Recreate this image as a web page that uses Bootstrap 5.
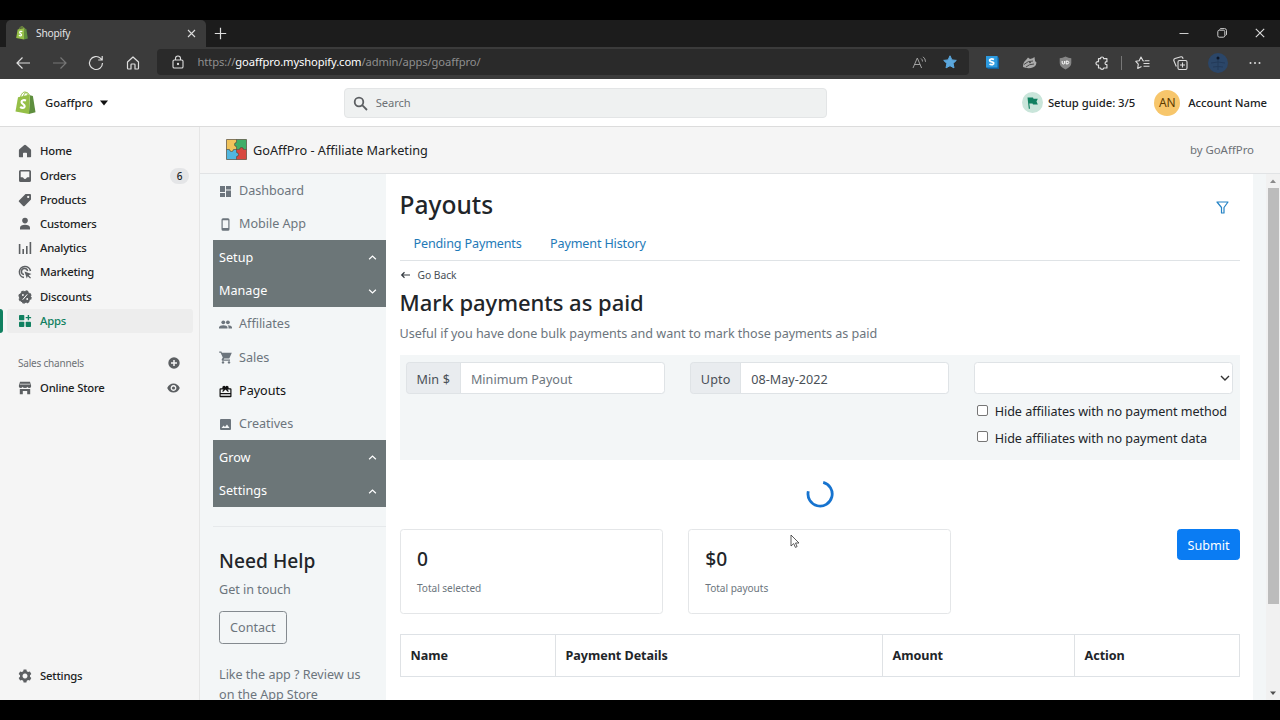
<!DOCTYPE html>
<html lang="en">
<head>
<meta charset="utf-8">
<meta name="viewport" content="width=device-width, initial-scale=1">
<title>Shopify</title>
<link href="https://cdn.jsdelivr.net/npm/bootstrap@5.3.0/dist/css/bootstrap.min.css" rel="stylesheet">
<style>
body{font-family:"Noto Sans","Open Sans",sans-serif;font-size:12.6px;line-height:20px;color:#212529;background:#000;padding:20px 0;height:720px;overflow:hidden;letter-spacing:-.04px}
svg{display:block;flex:none}
.window{height:680px;background:#f5f5f5}
/* browser chrome */
.strip{height:27px;background:#1c1c1c;color:#e4e4e4;padding-left:6px}
.btab{width:200px;background:#3b3b3b;border-radius:5px 5px 0 0;font-size:10.2px;padding:0 10px;letter-spacing:-.2px}
.controls{gap:28px;padding-right:15px}
.toolbar{height:32px;background:#3b3b3b;color:#dedede;padding:0 0 0 15px}
.nav-ico{gap:20.6px;width:142px}
.address{width:812px;flex-shrink:0;height:26px;background:#2a2a2a;border-radius:4px;font-size:11.2px;color:#8f8f8f;letter-spacing:-.1px;padding:0 12px 0 14px;margin-top:-1px}
.address b{font-weight:400;color:#fff}
.url{margin-left:12.5px}
.ext{gap:22.6px;padding-left:16px}
.ext .sep{margin:0 -10px}
.ext .profile{margin:0 -2px}
/* admin header */
.admin-top{height:49px;background:#fff;border-bottom:1px solid #dcdcdc;font-size:11.3px;font-weight:500;color:#202223;padding:1px 13px 0 15px}
.search-box{width:483px;height:30px;margin-left:236px;background:#eff1f1;border:1px solid #e3e5e6;border-radius:4px;font-weight:400;font-size:11.2px;color:#6d7175;padding:1px 0 0 8px;letter-spacing:-.12px}
.bag-gap{margin-left:9px}
.caret{margin-left:7px}
.flag{width:21px;height:21px;border-radius:50%;background:#c9e5da}
.setup{margin:0 19px 0 5px}
.avatar-an{width:26px;height:26px;border-radius:50%;background:#f7c66b;color:#5c3a00;font-weight:400;font-size:12px;line-height:26px;text-align:center}
/* admin sidebar */
.side{width:200px;border-right:1px solid #e6e6e6;padding:12.2px 7px 11.5px 7px;font-size:11.3px;font-weight:500;color:#202223;letter-spacing:-.2px}
.side-row{height:24.2px;gap:8px;padding:0 8px 0 11px}
.side-row svg{fill:#5c5f62}
.side-row.on{background:#ededed;border-radius:3px;color:#108060;margin-right:-.5px;position:relative}
.side-row.on svg{fill:#108060}
.side-row.on::before{content:"";position:absolute;left:-7px;top:0;width:2.5px;height:24px;background:#108060;border-radius:0 3px 3px 0}
.count{background:#e4e5e7;border-radius:9px;width:19px;height:16px;line-height:16px;text-align:center;font-size:10px;margin-right:-5px}
.channels{font-size:10px;font-weight:400;color:#6d7175;margin-top:18.4px}
/* app frame */
.app-title{height:46.5px;border-bottom:1.5px solid #e1e3e5;padding:0 26px 0 26px;font-size:12.7px;color:#202223;letter-spacing:0}
.app-name{margin-left:6px}
.by{font-size:11.4px;color:#6d7175}
.frame{background:#f3f6f7}
.app-side{width:186px;padding-left:12.6px;color:#6c757d}
.item{height:33.35px;gap:7px;padding:1.5px 0 0 6.5px;line-height:20px}
.item svg{fill:#6c757d}
.item.on{color:#111}.item.on svg{fill:#111}
.item.grp{background:#6c7678;color:#fff;padding-right:9px;letter-spacing:0}
.help{border-top:1px solid #e6e9eb;margin-top:19px;padding:21.5px 6.5px 0}
.help h5{font-size:19.2px;font-weight:500;line-height:24px;color:#212529;margin:0 0 7px;letter-spacing:0}
.help .btn{font-size:12.6px;line-height:20px;padding:6.3px 10px 4.3px;border:1px solid #848a8f;color:#6c757d;border-radius:3.4px;margin:11.5px 0 21px;letter-spacing:-.02px}
.review{max-width:150px}
.content{background:#fff;padding:0 13.5px 0 13.5px}
.content h2{font-size:24.5px;font-weight:500;line-height:30px;margin:0;padding-top:16px;letter-spacing:.02px}
.content h3{font-size:22px;font-weight:500;line-height:28px;margin:-1.5px 0 8px;letter-spacing:-.03px}
.tabs{height:31px;border-bottom:1px solid #dfe3e6;margin-top:10.4px;gap:28.500px;padding:4px 0 0 14px;color:#1f7ab8;letter-spacing:-.16px}
.goback{font-size:10.3px;gap:7px;color:#495057;height:28px;padding-top:0}
.filters{background:#f3f6f7;height:105px;margin-top:11.5px;padding:6.5px 6px 0}
.filters .row,.totals.row{--bs-gutter-x:25px}
.filters .input-group-text,.filters .form-control,.filters .form-select{font-size:12.6px;line-height:20px;padding:7px 10px 3.400px;height:32.5px;border-color:#dfe3e6;border-radius:3.4px;color:#495057}
.filters .input-group-text{background:#e9ecef;letter-spacing:.1px}
.filters .form-control::placeholder{color:#6c757d}
.filters .form-select{background-image:url("data:image/svg+xml,%3csvg xmlns='http://www.w3.org/2000/svg' viewBox='0 0 10 10'%3e%3cpath d='M1 3l4 4 4-4' fill='none' stroke='%23333' stroke-width='1.4'/%3e%3c/svg%3e");background-size:10px;background-position:right 2px center}
.chk{height:26.7px;gap:6.500px;padding:1.5px 0 0 3px;line-height:20px}
.chk input{width:11px;height:11px;margin:0 0 4px;border:1px solid #767676;border-radius:2px;appearance:none;background:#fff}
.loading{height:68.5px}
.stat{height:85.5px;border:1px solid #e4e6e8;border-radius:3.4px;padding:17.500px 16.5px;color:#212529}
.stat strong{display:block;font-size:19.2px;font-weight:500;line-height:24px}
.stat span{font-size:10.1px;color:#6c757d;line-height:16px;display:block;margin-top:9px}
.totals .btn{font-size:12.6px;line-height:20px;padding:6px 9.5px 3.6px;border-radius:3.4px;background:#0a7cf3;border-color:#0a7cf3;color:#fff;margin-right:-.5px}
.pay{table-layout:fixed;border-color:#dee2e6;margin:20px 0 0}
.pay th{height:42px;padding:1.500px 10px 0;vertical-align:middle;font-weight:700;border-color:#dfe2e5}
.gap-right{width:13px}
.sbar{width:14px;background:#f1f1f1}
.sbar i{display:block;width:11px;height:416px;margin:0 auto;background:#bcbcbc}
.filter-icon{margin:27.500px 11px 0 0}
.pointer{position:absolute;left:790px;top:534px}
</style>
</head>
<body>
<svg width="0" height="0" class="position-absolute">
<symbol id="bag" viewBox="0 0 20 24"><path d="M14.5 4.2 17.4 5 20 21.3 13.4 23z" fill="#5e8e3e"/><path d="M2.5 6.2 14.4 3.6 13.5 23 0 20.5z" fill="#95bf47"/><path d="M5 5.8C6 2.5 8 .8 9.6 1c1.700.2 2.400 2 2.400 3.500M8 5C8.700 2.300 10.500.8 12 1.600c1 .5 1.400 1.700 1.600 2.800" fill="none" stroke="#95bf47" stroke-width="1"/><path d="M10.500 9.600C8.800 8.700 6 9 6 11.100c0 2.100 3.400 2 3.200 4.200-.2 2-2.900 2-4.500.6" fill="none" stroke="#fff" stroke-width="2.100"/></symbol>
<symbol id="up" viewBox="0 0 8 6"><path d="M1 4.500 4 1.700l3 2.800" fill="none" stroke="#fff" stroke-width="1.100"/></symbol>
<symbol id="down" viewBox="0 0 8 6"><path d="M1 1.500 4 4.300l3-2.800" fill="none" stroke="#fff" stroke-width="1.100"/></symbol>
</svg>

<div class="window d-flex flex-column">
  <div class="strip d-flex">
    <div class="btab d-flex align-items-center">
      <svg width="12" height="14"><use href="#bag"/></svg><span class="ms-2">Shopify</span>
      <svg class="ms-auto" width="9" height="9" viewBox="0 0 9 9"><path d="M1 1l7 7M8 1 1 8" stroke="#ddd" stroke-width="1.100"/></svg>
    </div>
    <svg class="align-self-center ms-2" width="13" height="13" viewBox="0 0 13 13"><path d="M6.500.8v11.400M.8 6.500h11.400" stroke="#ddd" stroke-width="1.200"/></svg>
    <div class="controls ms-auto d-flex align-items-center">
      <svg width="10" height="10" viewBox="0 0 10 10"><path d="M.5 5.500h9" stroke="#ccc"/></svg>
      <svg width="10" height="10" viewBox="0 0 10 10" fill="none" stroke="#ccc"><rect x=".8" y="2.200" width="7" height="7" rx="1.500"/><path d="M2.500 1.500Q3 .6 4 .6h3.500q2 0 2 2V6q0 1.200-1 1.500"/></svg>
      <svg width="10" height="10" viewBox="0 0 10 10"><path d="M.8.8l8.400 8.400M9.200.8.8 9.200" stroke="#ddd" stroke-width="1.100"/></svg>
    </div>
  </div>

  <div class="toolbar d-flex align-items-center">
    <div class="nav-ico d-flex align-items-center flex-shrink-0">
      <svg width="16" height="16" viewBox="0 0 16 16" fill="none" stroke="#dedede" stroke-width="1.200"><path d="M15 8H2M7.500 2.500 2 8l5.500 5.500"/></svg>
      <svg width="16" height="16" viewBox="0 0 16 16" fill="none" stroke="#777" stroke-width="1.200"><path d="M1 8h13M8.500 2.500 14 8l-5.500 5.500"/></svg>
      <svg width="16" height="16" viewBox="0 0 16 16" fill="none" stroke="#dedede" stroke-width="1.200"><path d="M14.500 8A6.500 6.500 0 1 1 12.600 3.400L14 4.800M14.200 1v4h-4"/></svg>
      <svg width="16" height="16" viewBox="0 0 16 16" fill="none" stroke="#dedede" stroke-width="1.200"><path d="M2.500 7 8 2l5.500 5v6.200q0 .8-.8.8H10V9.800q0-.8-.8-.8H6.800q-.8 0-.8.8V14H3.300q-.8 0-.8-.8z" stroke-linejoin="round"/></svg>
    </div>
    <div class="address d-flex align-items-center">
      <svg width="14" height="14" viewBox="0 0 14 14" fill="none" stroke="#dedede" stroke-width="1.100"><rect x="2" y="5" width="10" height="8" rx="1.300"/><path d="M4.500 5V3.500a2.500 2.500 0 0 1 5 0V5"/><circle cx="7" cy="9" r=".6" fill="#fff"/></svg>
      <span class="url">https://<b>goaffpro.myshopify.com</b>/admin/apps/goaffpro/</span>
      <svg class="ms-auto" width="15" height="13" viewBox="0 0 15 13" fill="none" stroke="#a0a0a0" stroke-width="1"><path d="M1 12 5.300 2l4.300 10M2.500 8.500h5.600M9 2.500q1.500 1 1.500 3M11 .8q2.500 1.700 2.500 5"/></svg>
      <svg class="ms-3" width="14" height="14" viewBox="0 0 14 14"><path d="m7 .8 1.900 4.100 4.400.5-3.200 3 .9 4.500L7 10.700l-4 2.200.9-4.500-3.200-3 4.400-.5z" fill="#5ba7dd" stroke="#5ba7dd" stroke-linejoin="round"/></svg>
    </div>
    <div class="ext d-flex align-items-center">
      <svg width="14" height="14" viewBox="0 0 14 14"><path d="M1 0h11l2 2v11H3l-2-2z" fill="#0f5f9c"/><rect x="1" width="11.500" height="11.500" fill="#2d9be0"/><path d="M9 3.600Q7 2.600 5.500 3.200T5 5.200q.5.500 1.800.7t1.900.9q.4 1.300-1.200 1.800-1.700.3-3-.6" fill="none" stroke="#fff" stroke-width="1.700"/></svg>
      <svg width="15" height="13" viewBox="0 0 15 13"><path d="M1 11q0-5 3-7L6 1.500 8 3q3-.5 4.500-2L13 5l1.500 1.500Q14 11 9 12q-5 .5-8-1z" fill="#aaa"/><path d="M2 8.500q4-4 9-3.500M4 11q3-3 8-3" stroke="#4a4a4a" fill="none"/><circle cx="8" cy="6.500" r=".8" fill="#333"/></svg>
      <svg width="13" height="14" viewBox="0 0 13 14"><path d="M6.500.6q3 1.500 5.800 1.600V7q0 4-5.800 6.400Q.7 11 .7 7V2.200Q3.500 2.100 6.500.6z" fill="#868686"/><path d="M3.200 5v2q0 1 1.200 1t1.200-1V5M7.200 5v3q2.600.2 2.600-1.500T7.200 5z" fill="none" stroke="#fff"/></svg>
      <svg width="14" height="14" viewBox="0 0 14 14" fill="none" stroke="#dedede" stroke-width="1.200"><path d="M3.500 2.700h2q0-1.700 1.600-1.700t1.600 1.700h3.200v3Q10 5.700 10 7.200t1.900 1.500v3.300H8.700q0 1.400-1.600 1.400T5.500 12h-2V9Q1 9.200 1 7.300T3.500 5.700z" stroke-linejoin="round"/></svg>
      <svg class="sep" width="1" height="14"><path d="M.5 0v14" stroke="#777"/></svg>
      <svg width="15" height="14" viewBox="0 0 15 14" fill="none" stroke="#dedede" stroke-width="1.100"><path d="M9.500 5 8 4.800 6 1 4.200 4.800.8 5.300l2.500 2.800-.6 4.300 3.800-2M8.500 7.500h6M10 4.700h4.500M8.500 10.300h6" stroke-linejoin="round"/></svg>
      <svg width="15" height="14" viewBox="0 0 15 14" fill="none" stroke="#dedede" stroke-width="1.100"><rect x="5" y="4.500" width="9" height="9" rx="1.500"/><path d="M9.500 6.500v5M7 9h5M3.300 10.500.8 4.500Q.5 3 2 2.500L8 .8q1.200-.2 1.700 1l.4 1"/></svg>
      <svg class="profile" width="20" height="20" viewBox="0 0 20 20"><circle cx="10" cy="10" r="10" fill="#2b4668"/><path d="M10 4v13M3 10q7-2 14 0M5 14q5-1 10 0" stroke="#233a59" fill="none"/><circle cx="10" cy="5" r="1.500" fill="#0d1727"/></svg>
      <svg width="12" height="4" viewBox="0 0 12 4" fill="#ddd"><circle cx="1.500" cy="2" r="1"/><circle cx="6" cy="2" r="1"/><circle cx="10.500" cy="2" r="1"/></svg>
    </div>
  </div>

  <header class="admin-top d-flex align-items-center">
    <svg width="21" height="24"><use href="#bag"/></svg>
    <span class="bag-gap">Goaffpro</span>
    <svg class="caret" width="8" height="6" viewBox="0 0 8 6"><path d="M0 .5h8l-4 5z" fill="#111"/></svg>
    <div class="search-box d-flex align-items-center">
      <svg width="15" height="15" viewBox="0 0 15 15" fill="none" stroke="#5c5f62" stroke-width="1.800"><circle cx="6" cy="6" r="4.300"/><path d="m9.200 9.200 4.800 4.800"/></svg>
      <span class="ms-2">Search</span>
    </div>
    <div class="d-flex align-items-center ms-auto">
      <div class="flag d-flex align-items-center justify-content-center"><svg width="11" height="12" viewBox="0 0 11 12"><path d="M.5.500H6L6.500 1.700H10.800L9.500 4.500l1.300 3H6L5.500 6.500H2.300L3 11.800H1.800z" fill="#108060"/></svg></div>
      <span class="setup">Setup guide: 3/5</span>
      <div class="avatar-an">AN</div>
      <span class="ms-2">Account Name</span>
    </div>
  </header>

  <div class="d-flex flex-grow-1 overflow-hidden">
    <nav class="side d-flex flex-column flex-shrink-0">
      <div class="side-row d-flex align-items-center"><svg width="14" height="14" viewBox="0 0 14 14"><path d="M7 .8q.5 0 1 .4l4.600 4q.5.500.5 1.200v6q0 .8-.8.8H9V9.500q0-.8-.8-.8H5.800q-.8 0-.8.800v3.700H1.700q-.8 0-.8-.8v-6q0-.7.500-1.200L6 1.200q.5-.4 1-.4z"/></svg>Home</div>
      <div class="side-row d-flex align-items-center"><svg width="14" height="14" viewBox="0 0 14 14"><path fill-rule="evenodd" d="M2.500 1h9q1.500 0 1.500 1.500v9q0 1.500-1.500 1.500h-9Q1 13 1 11.500v-9Q1 1 2.500 1zm.2 1.600v5.600h1.600q.9 0 1.200.8.400.9 1.500.9t1.500-.9q.3-.8 1.200-.8h1.600V2.600z"/></svg>Orders<span class="count ms-auto">6</span></div>
      <div class="side-row d-flex align-items-center"><svg width="14" height="14" viewBox="0 0 14 14"><path fill-rule="evenodd" d="M7.500 1H12q1 0 1 1v4.500L6.600 12.900q-.8.500-1.500 0L1 8.800q-.6-.7 0-1.400zM10.200 2.800a1.100 1.100 0 1 0 .01 0z"/></svg>Products</div>
      <div class="side-row d-flex align-items-center"><svg width="14" height="14" viewBox="0 0 14 14"><circle cx="7" cy="3.600" r="2.800"/><path d="M2 12.500v-2q.5-2.700 5-2.700t5 2.700v2z"/></svg>Customers</div>
      <div class="side-row d-flex align-items-center"><svg width="14" height="14" viewBox="0 0 14 14"><path d="M.8 3h1.600v10H.800zM4.400 8H6v5H4.400zM8 5h1.600v8H8zM11.600 1h1.600v12h-1.600z"/></svg>Analytics</div>
      <div class="side-row d-flex align-items-center"><svg width="14" height="14" viewBox="0 0 14 14"><path d="M12.500 6A5.600 5.600 0 1 0 6 12.500M9.600 6A3.100 3.100 0 1 0 6 9.600" fill="none" stroke="#5c5f62" stroke-width="1.500"/><path d="m6.500 6.500 7 2.500-2.800 1.200 2.300 2.500-.9.900-2.400-2.400L8.800 13.500z"/></svg>Marketing</div>
      <div class="side-row d-flex align-items-center"><svg width="14" height="14" viewBox="0 0 14 14"><circle cx="7" cy="7" r="6" /><circle cx="7" cy="7" r="6" fill="none" stroke="#5c5f62" stroke-width="1.400" stroke-dasharray="2.600 2.110"/><path d="m4.700 9.700 4.600-5.400" stroke="#fff" stroke-width="1"/><circle cx="4.900" cy="5" r=".9" fill="#fff"/><circle cx="9.200" cy="9" r=".9" fill="#fff"/></svg>Discounts</div>
      <div class="side-row on d-flex align-items-center"><svg width="14" height="14" viewBox="0 0 14 14"><rect x="1" y="1" width="5.300" height="5.300" rx=".8"/><rect x="1" y="7.700" width="5.300" height="5.300" rx=".8"/><rect x="7.700" y="7.700" width="5.300" height="5.300" rx=".8"/><path d="M9.700 1h1.400v2h2v1.300h-2v2H9.700v-2h-2V3h2z"/></svg>Apps</div>
      <div class="side-row channels d-flex align-items-center">Sales channels<svg class="ms-auto me-1" width="12" height="12" viewBox="0 0 12 12"><circle cx="6" cy="6" r="5.700"/><path d="M6 3v6M3 6h6" stroke="#f5f5f5" stroke-width="1.500"/></svg></div>
      <div class="side-row d-flex align-items-center"><svg width="14" height="14" viewBox="0 0 14 14"><path d="M2 .8h10L13.200 5q0 2-1.800 2T9.500 5.800Q9 7 7 7T4.500 5.800Q4.400 7 2.600 7T.8 5zM1.800 8H12.200v5.200H9.200V10H4.800v3.200h-3z"/><path d="M2 3.200h10" stroke="#f5f5f5" stroke-width=".7"/></svg>Online Store<svg class="ms-auto me-1" width="13" height="12" viewBox="0 0 13 12"><path fill-rule="evenodd" d="M6.500 1.500q4.200 0 6.300 4.500-2.100 4.500-6.300 4.500T.2 6Q2.300 1.500 6.500 1.500zm0 1.600a2.900 2.900 0 1 0 .01 0z"/><circle cx="6.500" cy="6" r="1.600"/></svg></div>
      <div class="side-row d-flex align-items-center mt-auto"><svg width="14" height="14" viewBox="0 0 14 14"><path fill-rule="evenodd" d="M5.600.5h2.800l.4 1.800 1.300.8 1.800-.6 1.400 2.400-1.300 1.300v1.600l1.300 1.300-1.400 2.400-1.800-.6-1.300.8-.4 1.800H5.600l-.4-1.800-1.300-.8-1.800.6L.7 9.100 2 7.800V6.200L.7 4.900l1.400-2.400 1.800.6 1.300-.8zM7 4.500a2.500 2.500 0 1 0 .01 0z"/></svg>Settings</div>
    </nav>

    <main class="d-flex flex-column flex-grow-1">
      <div class="app-title d-flex align-items-center flex-shrink-0">
        <svg width="21" height="21" viewBox="0 0 21 21"><path d="M.5.500h10v10H.500z" fill="#f0c35b"/><path d="M10.500.5h10v10h-10z" fill="#3fae68"/><path d="M.5 10.500h10v10H.500z" fill="#51b7e0"/><path d="M10.500 10.500h10v10h-10z" fill="#d8483f"/><circle cx="10.500" cy="5.500" r="2" fill="#3fae68"/><circle cx="5.500" cy="10.500" r="2" fill="#f0c35b"/><circle cx="10.500" cy="15.500" r="2" fill="#51b7e0"/><circle cx="15.500" cy="10.500" r="2" fill="#d8483f"/><path d="M.5.5h20v20H.500zM10.500.500v3a2 2 0 1 0 0 4v6a2 2 0 1 1 0 4v3M.500 10.500h3a2 2 0 1 0 4 0h6a2 2 0 1 1 4 0h3" fill="none" stroke="#554a3a" stroke-width=".7"/></svg>
        <span class="app-name">GoAffPro - Affiliate Marketing</span>
        <span class="ms-auto by">by GoAffPro</span>
      </div>
      <div class="frame d-flex flex-grow-1 overflow-hidden">
        <aside class="app-side flex-shrink-0">
          <div class="item d-flex align-items-center"><svg width="13" height="13" viewBox="0 0 13 13"><path d="M1 1h5v6H1zM7 1h5v3.500H7zM1 8h5v4H1zM7 5.500h5V12H7z"/></svg>Dashboard</div>
          <div class="item d-flex align-items-center"><svg width="13" height="13" viewBox="0 0 13 13"><path fill-rule="evenodd" d="M4 .3h5q1.500 0 1.500 1.500v9.400q0 1.500-1.500 1.500H4q-1.500 0-1.500-1.500V1.800Q2.500.3 4 .3zm-.3 2v7.700h5.600V2.300z"/></svg>Mobile App</div>
          <div class="item grp d-flex align-items-center justify-content-between">Setup<svg width="9" height="7"><use href="#up"/></svg></div>
          <div class="item grp d-flex align-items-center justify-content-between">Manage<svg width="9" height="7"><use href="#down"/></svg></div>
          <div class="item d-flex align-items-center"><svg width="13" height="13" viewBox="0 0 13 13"><circle cx="4.300" cy="4.300" r="1.900"/><circle cx="8.900" cy="4.300" r="1.900"/><path d="M0 10.500V9.200Q.5 7.200 4.300 7.200T8.500 9.200v1.300zM9.500 10.500V9q0-1-.9-1.800 4 .1 4.400 2v1.300z"/></svg>Affiliates</div>
          <div class="item d-flex align-items-center"><svg width="13" height="13" viewBox="0 0 13 13"><path d="M.2.600h2.200l.5 1.200h9.900L10.300 7.400H5.200L4.600 8.500H11v1.200H3.200q-1-.4-.3-1.700l.9-1.500L1.600 1.800H.2z"/><circle cx="4" cy="11.400" r="1.200"/><circle cx="10" cy="11.400" r="1.200"/></svg>Sales</div>
          <div class="item on d-flex align-items-center"><svg width="13" height="13" viewBox="0 0 13 13"><path fill-rule="evenodd" d="M1.500 3.300h1.800Q3 .8 5 .8q.9 0 1.500 1Q7.100.8 8 .8q2 0 1.700 2.500h1.800q1 0 1 1v6.900q0 1-1 1h-10q-1 0-1-1V4.300q0-1 1-1zm.2 1.200v3.500h9.600V4.500H8.500L9.800 6.300 9 7 6.500 4.500 4 7l-.8-.7 1.300-1.800zm0 4.700v1.600h9.600V9.200z"/></svg>Payouts</div>
          <div class="item d-flex align-items-center"><svg width="13" height="13" viewBox="0 0 13 13"><path fill-rule="evenodd" d="M2 1h9q1 0 1 1v9q0 1-1 1H2q-1 0-1-1V2q0-1 1-1zm.5 9h8L8 6.500l-2 2.600-1.400-1.700z"/></svg>Creatives</div>
          <div class="item grp d-flex align-items-center justify-content-between">Grow<svg width="9" height="7"><use href="#up"/></svg></div>
          <div class="item grp d-flex align-items-center justify-content-between">Settings<svg width="9" height="7"><use href="#up"/></svg></div>
          <div class="help">
            <h5>Need Help</h5>
            <div>Get in touch</div>
            <button class="btn">Contact</button>
            <div class="review">Like the app ? Review us on the App Store</div>
          </div>
        </aside>

        <section class="content flex-grow-1">
          <div class="d-flex justify-content-between">
            <h2>Payouts</h2>
            <svg class="filter-icon" width="13" height="13" viewBox="0 0 13 13"><path d="M1 1h11L8 6.500V12H5.500V6.500z" fill="none" stroke="#2583c5" stroke-width="1.200" stroke-linejoin="round"/></svg>
          </div>
          <div class="tabs d-flex"><span>Pending Payments</span><span>Payment History</span></div>
          <div class="goback d-flex align-items-center"><svg width="11" height="8" viewBox="0 0 11 8"><path d="M10 4H2M4.500 1.300 1.700 4l2.800 2.700" fill="none" stroke="#343a40" stroke-width="1.200"/></svg>Go Back</div>
          <h3>Mark payments as paid</h3>
          <div class="text-secondary">Useful if you have done bulk payments and want to mark those payments as paid</div>

          <div class="filters">
            <div class="row">
              <div class="col-4"><div class="input-group"><span class="input-group-text">Min $</span><input class="form-control" placeholder="Minimum Payout"></div></div>
              <div class="col-4"><div class="input-group"><span class="input-group-text">Upto</span><input class="form-control" value="08-May-2022"></div></div>
              <div class="col-4">
                <select class="form-select mb-1"></select>
                <label class="chk d-flex align-items-center"><input type="checkbox">Hide affiliates with no payment method</label>
                <label class="chk d-flex align-items-center"><input type="checkbox">Hide affiliates with no payment data</label>
              </div>
            </div>
          </div>

          <div class="loading d-flex align-items-center justify-content-center">
            <svg width="28" height="28" viewBox="0 0 28 28"><path d="M17.200 2.300A12.100 12.100 0 1 1 2.300 11.300" fill="none" stroke="#1673cf" stroke-width="2.800"/></svg>
          </div>

          <div class="totals row">
            <div class="col-4"><div class="stat"><strong>0</strong><span>Total selected</span></div></div>
            <div class="col-4"><div class="stat"><strong>$0</strong><span>Total payouts</span></div></div>
            <div class="col-4 text-end"><button class="btn btn-primary">Submit</button></div>
          </div>

          <table class="pay table table-bordered">
            <colgroup><col style="width:155px"><col style="width:327px"><col style="width:192px"><col></colgroup>
            <tr><th>Name</th><th>Payment Details</th><th>Amount</th><th>Action</th></tr>
          </table>
        </section>
        <div class="gap-right flex-shrink-0"></div>
        <div class="sbar d-flex flex-column flex-shrink-0 justify-content-between">
          <svg class="mx-auto" width="14" height="14" viewBox="0 0 14 14"><path d="M4 9h6L7 5.500z" fill="#8a8a8a"/></svg>
          <i></i>
          <svg class="mx-auto mt-auto" width="14" height="14" viewBox="0 0 14 14"><path d="M4 5.500h6L7 9z" fill="#505050"/></svg>
        </div>
      </div>
    </main>
  </div>
</div>
<svg class="pointer" width="10" height="14" viewBox="0 0 10 14"><path d="M1 1v11l2.700-2.400 1.700 3.800 1.700-.8-1.600-3.600H9z" fill="#fff" stroke="#333" stroke-width=".8"/></svg>
<script src="https://cdn.jsdelivr.net/npm/bootstrap@5.3.0/dist/js/bootstrap.bundle.min.js"></script>
</body>
</html>
